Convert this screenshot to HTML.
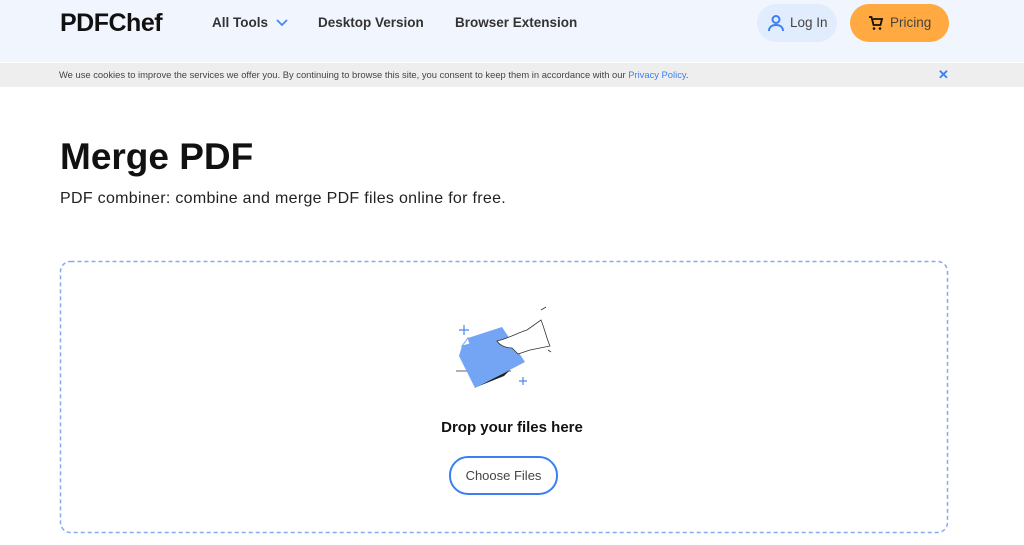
<!DOCTYPE html>
<html><head><meta charset="utf-8"><style>
body{margin:0;width:1024px;height:545px;overflow:hidden;background:#fff;font-family:"Liberation Sans",sans-serif;color:#111;position:relative}
.hdr{position:absolute;left:0;top:0;width:1024px;height:62px;background:#f1f6fe}
.logo{position:absolute;left:60px;top:9px;font-size:25px;font-weight:bold;letter-spacing:-0.5px}
.nav{position:absolute;top:15px;font-size:13.5px;font-weight:bold;color:#333}
.login{position:absolute;left:757px;top:4px;width:80px;height:38px;border-radius:19px;background:#e1edfd;font-size:13.5px;color:#444}
.pricing{position:absolute;left:850px;top:4px;width:99px;height:38px;border-radius:19px;background:#ffa940;font-size:13.5px;color:#444}
.cookie{position:absolute;left:0;top:63px;width:1024px;height:24px;background:#eeeeee;font-size:9.4px;color:#444;line-height:24px}
h1{position:absolute;left:60px;top:136px;margin:0;font-size:37px;font-weight:bold}
.sub{position:absolute;left:60px;top:190px;font-size:16px;color:#222;letter-spacing:0.3px}
.dt{position:absolute;left:0;width:1024px;top:419px;text-align:center;font-size:15px;font-weight:bold}
.btn{position:absolute;left:449px;top:456px;width:105px;height:35px;border:2px solid #3b7ff2;border-radius:19px;font-size:13px;color:#444;text-align:center;line-height:35px}
</style></head><body>
<div class="hdr">
<div class="logo">PDFChef</div>
<div class="nav" style="left:212px">All Tools <svg width="12" height="8" viewBox="0 0 12 8" style="margin-left:4px"><path d="M1 1l5 5 5-5" fill="none" stroke="#4a86f0" stroke-width="1.8"/></svg></div>
<div class="nav" style="left:318px">Desktop Version</div>
<div class="nav" style="left:455px">Browser Extension</div>
<div class="login"><svg width="18" height="18" viewBox="0 0 18 18" style="position:absolute;left:10px;top:10px"><circle cx="9" cy="5.5" r="3.5" fill="none" stroke="#3b7ff2" stroke-width="2"/><path d="M2 17c0-4 3-6 7-6s7 2 7 6" fill="none" stroke="#3b7ff2" stroke-width="2"/></svg><span style="position:absolute;left:33px;top:11px">Log In</span></div>
<div class="pricing"><svg width="16" height="16" viewBox="0 0 16 16" style="position:absolute;left:18px;top:11px"><path d="M1 2h2.5l2 8h7l1.5-6H5" fill="none" stroke="#111" stroke-width="1.8"/><circle cx="6" cy="13.5" r="1.3" fill="#111"/><circle cx="12" cy="13.5" r="1.3" fill="#111"/></svg><span style="position:absolute;left:40px;top:11px">Pricing</span></div>
</div>
<div class="cookie"><span style="position:absolute;left:59px">We use cookies to improve the services we offer you. By continuing to browse this site, you consent to keep them in accordance with our <span style="color:#3b7ff2">Privacy Policy</span>.</span><span style="position:absolute;left:938px;color:#3b7ff2;font-size:13px;font-weight:bold">✕</span></div>
<h1>Merge PDF</h1>
<div class="sub">PDF combiner: combine and merge PDF files online for free.</div>
<svg width="1024" height="545" style="position:absolute;left:0;top:0"><rect x="60.5" y="261.5" width="887" height="271" rx="10" fill="none" stroke="#84abf0" stroke-width="1.5" stroke-dasharray="4 3"/></svg>
<svg width="120" height="90" viewBox="420 300 120 90" style="position:absolute;left:420px;top:300px;overflow:visible">
<path d="M456 371h55" stroke="#333" stroke-width="0.8"/>
<path d="M474 388l30-12 6-6z" fill="#222"/>
<path d="M462 346l6-8 34-11 23 35-50 26-16-32z" fill="#74a5f4"/>
<path d="M462 346l6-8 2 6z" fill="#fff" stroke="#74a5f4"/>
<path d="M497 341c10-2 20-8 30-11l14-10c4 10 6 20 9 26l-20 4-12 4-6-6c-5 0-12-2-15-7z" fill="#fff" stroke="#333" stroke-width="0.8"/>
<path d="M541 310l5-3M548 350l3 2" stroke="#333" stroke-width="0.8"/>
<path d="M459 330h10M464 325v10M519 381h8M523 377v8" stroke="#4a86f0" stroke-width="1.2"/>
</svg>
<div class="dt">Drop your files here</div>
<div class="btn">Choose Files</div>
</body></html>
